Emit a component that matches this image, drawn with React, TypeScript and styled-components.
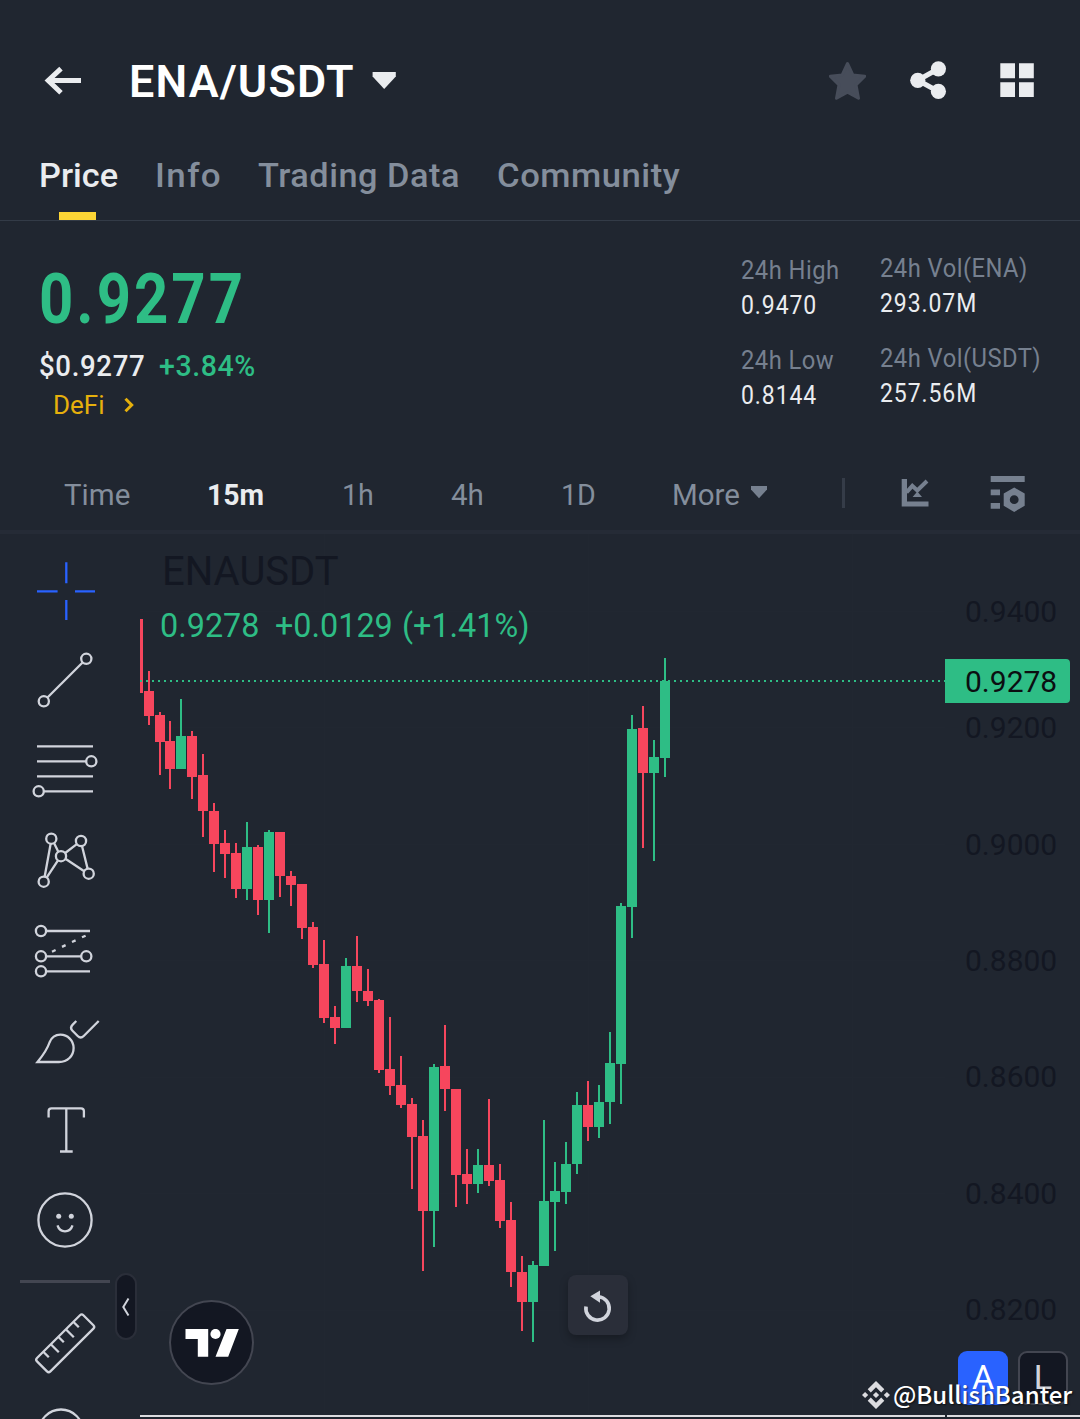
import React from "react";
import styled, { createGlobalStyle } from "styled-components";

const color = {
  bg: "#202630",
  text: "#eaecef",
  muted: "#848e9c",
  dim: "#76808f",
  up: "#2ebd85",
  down: "#f6465d",
  ink: "#131722",
  tool: "#d1d4dc",
  edge: "#434651",
  blue: "#2962ff",
};

const GlobalStyle = createGlobalStyle`
  *, *::before, *::after { box-sizing: border-box; }
  body { margin: 0; background: ${color.bg}; }
`;

const Screen = styled.main`
  display: flex;
  flex-direction: column;
  position: relative;
  width: 1080px;
  height: 1419px;
  overflow: hidden;
  background: ${color.bg};
  color: ${color.text};
  font-family: Roboto, "Liberation Sans", sans-serif;
`;

const Label = styled.span<{ $size: number; $weight?: number; $color?: string; $track?: number; $squeeze?: number }>`
  display: block;
  flex: none;
  margin: 0;
  white-space: pre;
  line-height: 1;
  font-size: ${(p) => p.$size}px;
  font-weight: ${(p) => p.$weight ?? 400};
  color: ${(p) => p.$color ?? "inherit"};
  letter-spacing: ${(p) => p.$track ?? 0}px;
  transform: scaleX(${(p) => p.$squeeze ?? 1});
  transform-origin: left center;
`;

const Glyph = styled.svg`
  display: block;
  flex: none;
`;

/* ---------- header ---------- */

const Header = styled.header`
  display: flex;
  align-items: center;
  flex: none;
  height: 80px;
  margin-top: 41px;
  padding: 0 45px 0 44px;
`;

const Title = styled.h1`
  display: flex;
  align-items: center;
  gap: 20px;
  width: 320px;
  margin: 0 auto 0 47px;
`;

const TitleName = styled.div`
  width: 223px;
  padding-top: 4px;
`;

const Actions = styled.div`
  display: flex;
  align-items: center;
  gap: 44px;
`;

const Tabs = styled.nav`
  display: flex;
  align-items: stretch;
  flex: none;
  height: 100px;
  padding-left: 39px;
  border-bottom: 1px solid #333b47;
`;

const Tab = styled.a<{ $width: number; $active?: boolean }>`
  display: flex;
  flex-direction: column;
  align-items: flex-start;
  width: ${(p) => p.$width}px;
  margin-right: 37px;
  padding-top: 38px;
  color: ${(p) => (p.$active ? color.text : color.muted)};
`;

const TabMark = styled.i`
  width: 37px;
  height: 8px;
  margin: auto 0 0 20px;
  background: #fcd535;
`;

/* ---------- summary ---------- */

const Summary = styled.section`
  display: flex;
  justify-content: space-between;
  flex: none;
  height: 237px;
  padding: 0 24px 0 39px;
`;

const Quote = styled.div`
  display: flex;
  flex-direction: column;
  padding-top: 43px;
`;

const QuoteLine = styled.div`
  display: flex;
  align-items: center;
  height: 40px;
  margin-top: 12px;
`;

const FiatCell = styled.div`
  width: 120px;
`;

const Tag = styled.div`
  display: flex;
  align-items: center;
  gap: 21px;
  height: 36px;
  margin-top: 1px;
  padding-left: 14px;
  color: #e6b00c;
`;

const TagName = styled.div`
  width: 50px;
`;

const Stats = styled.div`
  display: flex;
`;

const StatColumn = styled.dl<{ $width: number; $top: number }>`
  display: flex;
  flex-direction: column;
  gap: 20px;
  width: ${(p) => p.$width}px;
  margin: 0;
  padding-top: ${(p) => p.$top}px;
`;

const Stat = styled.div`
  display: flex;
  flex-direction: column;
  justify-content: space-between;
  height: 70px;
  padding: 5px 0;
`;

/* ---------- intervals ---------- */

const Intervals = styled.div`
  display: flex;
  align-items: center;
  flex: none;
  height: 76px;
  padding-left: 64px;
  border-bottom: 4px solid #252b36;
`;

const Interval = styled.div<{ $width: number }>`
  display: flex;
  align-items: center;
  flex: none;
  width: ${(p) => p.$width}px;
  padding-top: 4px;
`;

const MoreArrow = styled.div`
  width: 91px;
`;

const IntervalRule = styled.i`
  width: 3px;
  height: 30px;
  margin: 0 56px 2px 0;
  background: #353c48;
`;

/* ---------- chart ---------- */

const Workspace = styled.section`
  display: flex;
  flex: none;
  height: 885px;
`;

const Toolbar = styled.aside`
  display: flex;
  flex-direction: column;
  position: relative;
  width: 140px;
  height: 885px;
  padding: 12px 0 0 20px;
  overflow: hidden;
`;

const ToolRule = styled.i`
  flex: none;
  width: 90px;
  height: 3px;
  margin: 14px 0 15px;
  background: ${color.edge};
`;

const Collapse = styled.button`
  position: absolute;
  left: 115px;
  top: 739px;
  display: flex;
  align-items: center;
  justify-content: center;
  width: 22px;
  height: 67px;
  padding: 0;
  border: 2px solid #2a2e39;
  border-radius: 11px;
  background: ${color.ink};
`;

const Plot = styled.div`
  position: relative;
  width: 805px;
  height: 885px;
`;

const Legend = styled.div`
  position: absolute;
  left: 20px;
  top: 18px;
`;

const LegendTitle = styled.div`
  height: 40px;
  padding-left: 2px;
`;

const LegendValues = styled.div`
  display: flex;
  align-items: center;
  height: 40px;
  margin-top: 13px;
`;

const LegendCell = styled.div<{ $width: number }>`
  width: ${(p) => p.$width}px;
`;

const Brand = styled.div`
  position: absolute;
  left: 29px;
  top: 766px;
  display: flex;
  align-items: center;
  justify-content: center;
  width: 85px;
  height: 85px;
  border: 2.5px solid ${color.edge};
  border-radius: 50%;
  background: ${color.ink};
`;

const Reset = styled.button`
  position: absolute;
  left: 428px;
  top: 741px;
  display: flex;
  align-items: center;
  justify-content: center;
  width: 60px;
  height: 60px;
  padding: 0;
  border: 0;
  border-radius: 8px;
  background: #2a2e39;
  box-shadow: 0 4px 8px rgba(0, 0, 0, 0.28);
`;

const Scale = styled.div`
  position: relative;
  display: flex;
  flex-direction: column;
  width: 135px;
  height: 885px;
  padding: 20px 0 0 20px;
`;

const ScaleMark = styled.div`
  display: flex;
  align-items: center;
  flex: none;
  height: 116.3px;
`;

const LastPrice = styled.div`
  position: absolute;
  left: 0;
  top: 125px;
  display: flex;
  align-items: center;
  width: 125px;
  height: 44px;
  padding: 2px 0 0 20px;
  border-radius: 0 4px 4px 0;
  background: ${color.up};
`;

const ScaleModes = styled.div`
  position: absolute;
  left: 13px;
  top: 817px;
  display: flex;
  gap: 10px;
`;

const ScaleMode = styled.button<{ $on?: boolean }>`
  display: flex;
  justify-content: center;
  width: 50px;
  height: 54px;
  padding: ${(p) => (p.$on ? 9 : 7)}px 0 0;
  border: ${(p) => (p.$on ? "0" : `2px solid ${color.edge}`)};
  border-radius: 9px;
  background: ${(p) => (p.$on ? color.blue : color.ink)};
  color: ${(p) => (p.$on ? "#fff" : color.tool)};
  font-family: inherit;
`;

const TimeAxisEdge = styled.i<{ $inset: number }>`
  position: absolute;
  left: ${(p) => p.$inset}px;
  right: 0;
  bottom: 2px;
  height: 2px;
  background: #dcdce0;
`;

const Watermark = styled.div`
  position: absolute;
  left: 862px;
  top: 1377px;
  display: flex;
  align-items: center;
  gap: 3px;
  height: 36px;
  color: #fff;
  font: 500 24px/36px "Noto Sans CJK SC", "Noto Sans", sans-serif;
  white-space: nowrap;
  text-shadow: 1px 1px 2px rgba(0, 0, 0, 0.7);
`;

const Handle = styled.span`
  display: block;
  margin-top: -2px;
`;

/* ---------- data ---------- */

// [x, high, bodyTop, bodyBottom, low, rising]
const candles: [number, number, number, number, number, 0 | 1][] = [
  [144, 671, 691, 716, 725, 0], [155, 712, 715, 742, 775, 0], [165, 721, 741, 769, 789, 0],
  [176, 699, 736, 769, 769, 1], [187, 731, 736, 777, 799, 0], [198, 754, 775, 811, 837, 0],
  [209, 803, 811, 844, 872, 0], [220, 830, 843, 854, 878, 0], [231, 843, 853, 889, 898, 0],
  [242, 822, 847, 889, 900, 1], [253, 845, 847, 900, 915, 0], [264, 830, 832, 900, 933, 1],
  [275, 832, 832, 876, 897, 0], [286, 871, 876, 885, 906, 0], [297, 884, 884, 928, 939, 0],
  [308, 922, 927, 965, 968, 0], [319, 940, 964, 1018, 1023, 0], [330, 1006, 1017, 1028, 1044, 0],
  [341, 958, 966, 1028, 1028, 1], [352, 936, 966, 991, 1002, 0], [363, 969, 991, 1001, 1006, 0],
  [374, 999, 1000, 1070, 1073, 0], [385, 1017, 1069, 1086, 1095, 0], [396, 1056, 1085, 1105, 1108, 0],
  [407, 1098, 1104, 1137, 1189, 0], [418, 1120, 1136, 1211, 1271, 0], [429, 1064, 1067, 1211, 1247, 1],
  [440, 1025, 1066, 1089, 1111, 0], [451, 1089, 1089, 1175, 1207, 0], [462, 1149, 1174, 1184, 1204, 0],
  [473, 1149, 1165, 1184, 1193, 1], [484, 1099, 1165, 1181, 1186, 0], [495, 1164, 1180, 1221, 1228, 0],
  [506, 1202, 1220, 1272, 1287, 0], [517, 1256, 1272, 1302, 1331, 0], [528, 1261, 1265, 1302, 1342, 1],
  [539, 1120, 1201, 1266, 1266, 1], [550, 1162, 1191, 1202, 1251, 1], [561, 1142, 1164, 1192, 1204, 1],
  [572, 1092, 1105, 1164, 1174, 1], [583, 1081, 1105, 1127, 1141, 0], [594, 1085, 1102, 1127, 1138, 1],
  [605, 1032, 1063, 1102, 1124, 1], [616, 903, 906, 1064, 1104, 1], [627, 715, 729, 907, 938, 1],
  [638, 706, 728, 773, 848, 0], [649, 740, 757, 773, 861, 1], [660, 658, 681, 758, 777, 1],
];

const marks = ["0.9400", "0.9200", "0.9000", "0.8800", "0.8600", "0.8400", "0.8200"];

const stats = [
  { width: 139, top: 32, items: [["24h High", "0.9470"], ["24h Low", "0.8144"]] },
  { width: 176, top: 30, items: [["24h Vol(ENA)", "293.07M"], ["24h Vol(USDT)", "257.56M"]] },
];

/* ---------- icons ---------- */

const Tool = ({ children, stroke = color.tool }: { children: React.ReactNode; stroke?: string }) => (
  <Glyph width="90" height="90" viewBox="0 0 90 90" fill="none" stroke={stroke} strokeWidth="2.3">
    {children}
  </Glyph>
);

const Dot = ({ x, y }: { x: number; y: number }) => <circle cx={x} cy={y} r="5.1" />;

const Tools = () => (
  <Toolbar>
    <Tool stroke={color.blue}>
      <path d="M46.3 16.3v21M46.3 54v20M17 45.3h20.6M55 45.3h20" />
    </Tool>
    <Tool>
      <Dot x={66.3} y={22.8} />
      <Dot x={23.8} y={65.3} />
      <path d="M27.5 61.5 62.6 26.5" />
    </Tool>
    <Tool>
      <path d="M17 20.3h56M17 35.3h49M17 50.3h56M24 65.3h49" />
      <Dot x={71.3} y={35.3} />
      <Dot x={18.7} y={65.3} />
    </Tool>
    <Tool>
      <Dot x={31.3} y={22.7} />
      <Dot x={61} y={25} />
      <Dot x={41} y={40.2} />
      <Dot x={23.7} y={65.7} />
      <Dot x={68.7} y={57.7} />
      <path d="M30.6 28 24.7 60.5M34 27 38.3 35.8M38 44.3 26.8 61.3M45.2 37 56.8 28.2M62 30 67.6 52.6M45.4 42.8 64.2 55.2" />
    </Tool>
    <Tool>
      <Dot x={21} y={25} />
      <Dot x={21} y={50.3} />
      <Dot x={66.3} y={50.3} />
      <Dot x={21} y={65.3} />
      <path d="M26 25h44M26 50.3h35M26 65.3h44M32 45.8l3.6-1.8M42 40.9l3.6-1.8M52 36l3.6-1.6M62 31.3l3.6-1.6" />
    </Tool>
    <Tool>
      <path d="M17.5 66C24.5 57.5 27.5 52.5 29.5 46.5 31.5 41.5 35.5 38.7 40.3 38.7 47.8 38.7 53.6 44.6 53.6 52 53.6 60 47.5 66 39 66Z" />
      <path d="M56.3 25l-3.6 3.6c-2 2-2 4.4-.2 6.2l5.2 5.2c1.8 1.8 4.2 1.8 6 0L78.7 25" />
    </Tool>
    <Tool>
      <path d="M28.6 31.4V25.3q0-2.9 2.9-2.9H61q2.9 0 2.9 2.9v6.1M46.3 22.4v43M40 65.5h12.7" />
    </Tool>
    <Tool>
      <circle cx="45" cy="44" r="26.6" />
      <g fill={color.tool} stroke="none">
        <circle cx="38.7" cy="40.3" r="2.5" />
        <circle cx="51.3" cy="40.3" r="2.5" />
      </g>
      <path d="M37.5 49.4c1.2 3.9 4.2 5.9 7.5 5.9s6.3-2 7.5-5.9" />
    </Tool>
    <ToolRule />
    <Tool>
      <path strokeLinejoin="round" d="M60 17.2q1.7-1.7 3.4 0L73.4 27.2q1.7 1.7 0 3.4L30.4 73.4q-1.7 1.7-3.4 0L17 63.4q-1.7-1.7 0-3.4Z" />
      <path d="M23.3 53.7l5.5 5.5M30.8 46.2l8 8M38.3 38.7l5.5 5.5M45.8 31.2l8 8M53.3 23.7l5.5 5.5" />
    </Tool>
    <Tool>
      <circle cx="41" cy="43.5" r="22" />
    </Tool>
    <Collapse>
      <Glyph width="10" height="22" viewBox="0 0 10 22" fill="none" stroke={color.tool} strokeWidth="2">
        <path d="M7.5 2.5 2.3 11l5.2 8.5" />
      </Glyph>
    </Collapse>
  </Toolbar>
);

const Candles = () => (
  <Glyph width="805" height="885" viewBox="140 534 805 885" shapeRendering="crispEdges">
    <path
      d="M324.5 534V1414M588.5 534V1414M852.5 534V1414M140 611.5H945M140 727.5H945M140 844.5H945M140 960.5H945M140 1077.5H945M140 1193.5H945M140 1310.5H945"
      stroke="#212731"
    />
    <rect x="140" y="619" width="3" height="74" fill={color.down} />
    {candles.map(([x, high, top, bottom, low, up]) => (
      <g key={x} fill={up ? color.up : color.down}>
        <rect x={x + 4} y={high} width="2" height={low - high} />
        <rect x={x} y={top} width="10" height={bottom - top} />
      </g>
    ))}
    <path d="M140 681H945" stroke={color.up} strokeWidth="2" strokeDasharray="2 4" />
  </Glyph>
);

const App = () => (
  <>
    <GlobalStyle />
    <Screen>
      <Header>
        <Glyph width="38" height="30" viewBox="44 66 38 30" fill="none" stroke={color.text} strokeWidth="5">
          <path d="M81 80.5H48M61 68.7 48.2 80.5 61 92.7" />
        </Glyph>
        <Title>
          <TitleName>
            <Label $size={43.5} $weight={600} $color="#fff" $squeeze={1.03} $track={1.1}>ENA/USDT</Label>
          </TitleName>
          <Glyph width="24" height="18" viewBox="372 74 24 18" fill={color.text}>
            <path d="M372.6 74h23.2v4.5L384.2 91 372.6 78.5Z" />
          </Glyph>
        </Title>
        <Actions>
          <Glyph width="37" height="40" viewBox="829 61 37 40" fill="#474d5a" stroke="#474d5a" strokeWidth="3" strokeLinejoin="round">
            <path d="M847.5 63.5 852.8 74.9 864.8 76.3 856 84.9 858.5 98.3 847.5 92.3 836.5 98.3 839 84.9 830.2 76.3 842.2 74.9Z" />
          </Glyph>
          <Glyph width="37" height="40" viewBox="910 61 37 40" fill={color.text}>
            <path d="M938.4 68.7 917.8 80.3 938.4 91.5" fill="none" stroke={color.text} strokeWidth="5" />
            <circle cx="917.8" cy="80.3" r="7.6" />
            <circle cx="938.4" cy="68.8" r="7.6" />
            <circle cx="938.4" cy="91.4" r="7.6" />
          </Glyph>
          <Glyph width="44" height="36" viewBox="991 63 44 36" fill={color.text}>
            <path d="M1000.3 63.2h14.7v15h-14.7zM1019 63.2h14.8v15H1019zM1000.3 82.2h14.7v14.8h-14.7zM1019 82.2h14.8v14.8H1019z" />
          </Glyph>
        </Actions>
      </Header>

      <Tabs>
        <Tab $width={79} $active>
          <Label $size={33} $weight={500} $squeeze={1.04}>Price</Label>
          <TabMark />
        </Tab>
        <Tab $width={66}><Label $size={33} $weight={500} $squeeze={1.06} $track={1.3}>Info</Label></Tab>
        <Tab $width={202}><Label $size={33} $weight={500} $squeeze={1.04} $track={0.5}>Trading Data</Label></Tab>
        <Tab $width={183}><Label $size={33} $weight={500} $squeeze={1.05} $track={0.5}>Community</Label></Tab>
      </Tabs>

      <Summary>
        <Quote>
          <Label $size={70} $weight={700} $color={color.up} $squeeze={0.855} $track={3.5}>0.9277</Label>
          <QuoteLine>
            <FiatCell><Label $size={30} $weight={500} $squeeze={0.92} $track={0.7}>$0.9277</Label></FiatCell>
            <Label $size={30} $weight={500} $color={color.up} $squeeze={0.95} $track={0.6}>+3.84%</Label>
          </QuoteLine>
          <Tag>
            <TagName><Label $size={26}>DeFi</Label></TagName>
            <Glyph width="10" height="16" viewBox="0 0 10 16" fill="none" stroke="currentColor" strokeWidth="3">
              <path d="M1.5 1.8 7.7 8l-6.2 6.2" />
            </Glyph>
          </Tag>
        </Quote>
        <Stats>
          {stats.map((column) => (
            <StatColumn key={column.width} $width={column.width} $top={column.top}>
              {column.items.map(([name, value]) => (
                <Stat key={name}>
                  <Label as="dt" $size={25} $color={color.dim} $squeeze={0.95} $track={0.5}>{name}</Label>
                  <Label as="dd" $size={25} $squeeze={0.92} $track={1}>{value}</Label>
                </Stat>
              ))}
            </StatColumn>
          ))}
        </Stats>
      </Summary>

      <Intervals>
        <Interval $width={143}><Label $size={29.5} $color={color.muted}>Time</Label></Interval>
        <Interval $width={135}><Label $size={29.5} $weight={700} $squeeze={0.96}>15m</Label></Interval>
        <Interval $width={109}><Label $size={29.5} $color={color.muted} $squeeze={0.97}>1h</Label></Interval>
        <Interval $width={110}><Label $size={29.5} $color={color.muted}>4h</Label></Interval>
        <Interval $width={111}><Label $size={29.5} $color={color.muted} $squeeze={0.97}>1D</Label></Interval>
        <Interval $width={79}><Label $size={29.5} $color={color.muted}>More</Label></Interval>
        <MoreArrow>
          <Glyph width="16" height="18" viewBox="751 485 16 18" fill={color.dim}>
            <path d="M751 486h16v3.5L759 498.3 751 489.5Z" />
          </Glyph>
        </MoreArrow>
        <IntervalRule />
        <Glyph width="30" height="30" viewBox="901 479 30 30" fill={color.dim}>
          <path d="M901.7 479h5.3v22.5h21.5v5h-26.8zM917.3 491.5l4.7 5.5h-9.4z" />
          <path d="M906.5 492.3 912.3 485.9 917.3 490.5 927 481" fill="none" stroke={color.dim} strokeWidth="4" />
        </Glyph>
        <Glyph width="96" height="40" viewBox="931 474 96 40" fill={color.dim}>
          <path d="M990.7 476h34v6h-34zM990.7 489.5h9.3v5.7h-9.3zM990.7 503h9.3v5.7h-9.3z" />
          <path fillRule="evenodd" d="M1014.2 487.5 1024.7 493.6v12.2L1014.2 511.9 1003.7 505.8v-12.2ZM1014.2 495.3a4.4 4.4 0 1 0 0 8.8a4.4 4.4 0 1 0 0-8.8Z" />
        </Glyph>
      </Intervals>

      <Workspace>
        <Tools />
        <Plot>
          <Candles />
          <Legend>
            <LegendTitle><Label $size={40} $color={color.ink}>ENAUSDT</Label></LegendTitle>
            <LegendValues>
              <LegendCell $width={114.5}><Label $size={33} $color={color.up} $squeeze={0.98}>0.9278</Label></LegendCell>
              <LegendCell $width={127}><Label $size={33} $color={color.up} $squeeze={0.98}>+0.0129</Label></LegendCell>
              <Label $size={33} $color={color.up} $squeeze={0.98}>(+1.41%)</Label>
            </LegendValues>
          </Legend>
          <Brand>
            <Glyph width="54" height="28" viewBox="184.5 1330 54 28" fill="#fff">
              <path d="M185 1330h22.7v27.7h-10.4V1340H185zM226 1330h12.3l-10.6 27.7H215z" />
              <circle cx="215" cy="1335" r="5.1" />
            </Glyph>
          </Brand>
          <Reset>
            <Glyph width="60" height="60" viewBox="568 1275 60 60" fill="none">
              <path d="M586 1306.5A11.7 11.7 0 1 0 598.5 1296.7" stroke={color.tool} strokeWidth="3.6" />
              <path d="M590.3 1296.3 600 1290.5v12.3Z" fill={color.tool} />
            </Glyph>
          </Reset>
          <TimeAxisEdge $inset={0} />
        </Plot>
        <Scale>
          {marks.map((m) => (
            <ScaleMark key={m}><Label $size={30} $color={color.ink}>{m}</Label></ScaleMark>
          ))}
          <LastPrice><Label $size={30} $color="#0b0e11">0.9278</Label></LastPrice>
          <ScaleModes>
            <ScaleMode $on><Label $size={34}>A</Label></ScaleMode>
            <ScaleMode><Label $size={34}>L</Label></ScaleMode>
          </ScaleModes>
          <TimeAxisEdge $inset={2} />
        </Scale>
      </Workspace>

      <Watermark>
        <Glyph width="28" height="28" viewBox="0 0 28 28" fill="#dcdce0">
          <path d="M14 0l8.3 8.3-3.1 3.1L14 6.2 8.8 11.4 5.7 8.3ZM14 28l8.3-8.3-3.1-3.1L14 21.8 8.8 16.6 5.7 19.7ZM3.1 10.9 6.2 14 3.1 17.1 0 14ZM14 10.9 17.1 14 14 17.1 10.9 14ZM24.9 10.9 28 14 24.9 17.1 21.8 14Z" />
        </Glyph>
        <Handle>@BullishBanter</Handle>
      </Watermark>
    </Screen>
  </>
);

export default App;
